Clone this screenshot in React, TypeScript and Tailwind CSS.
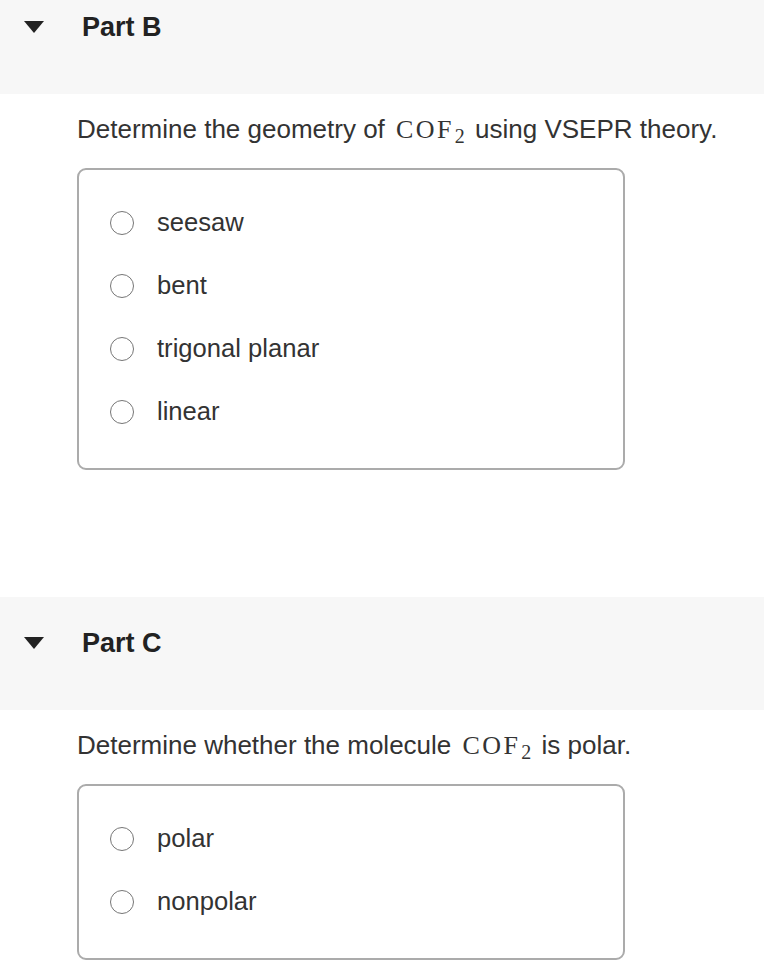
const Caret = () => (
  <svg width="20" height="12" viewBox="0 0 20 12" className="shrink-0">
    <polygon points="0,0 20,0 10,12" fill="#222222" />
  </svg>
);

// COF2 set in a math-like serif face
const Formula = () => (
  <span className="font-['Liberation_Serif','DejaVu_Serif',serif] text-[26px] tracking-[2.4px] ml-[4px] mr-[3px]">
    COF
    <sub className="text-[20px] tracking-normal ml-[1px]">2</sub>
  </span>
);

const PartHeader = ({ label, first }: { label: string; first?: boolean }) => (
  <div
    className={`bg-[#f7f7f7] h-[113px] pt-[30px] pl-[24px] flex items-start ${first ? "-mt-[19px]" : ""}`}
  >
    <div className="flex items-center h-[32px]">
      <Caret />
      <h2 className="ml-[38px] text-[27px] leading-[32px] font-bold text-[#222222]">
        {label}
      </h2>
    </div>
  </div>
);

const Choices = ({ options }: { options: string[] }) => (
  <div className="mt-[21px] w-[548px] border-2 border-[#ababab] rounded-[9px] pt-[21px] pb-[25px]">
    {options.map((opt) => (
      <label key={opt} className="h-[63px] flex items-center pl-[31px]">
        <span className="w-6 h-6 rounded-full border-[1.5px] border-[#767676] bg-white shrink-0" />
        <span className="ml-[23px] text-[25.6px] text-[#333333]">{opt}</span>
      </label>
    ))}
  </div>
);

export default function App() {
  return (
    <div className="w-[764px] h-[976px] overflow-hidden bg-white font-['Liberation_Sans',Arial,sans-serif]">
      {/* Part B */}
      <PartHeader label="Part B" first />
      <div className="pl-[77px]">
        <p className="pt-[18px] text-[26px] leading-[34px] text-[#333333]">
          Determine the geometry of <Formula /> using VSEPR theory.
        </p>
        <Choices options={["seesaw", "bent", "trigonal planar", "linear"]} />
      </div>

      {/* Part C */}
      <div className="mt-[127px]">
        <PartHeader label="Part C" />
        <div className="pl-[77px]">
          <p className="pt-[18px] text-[26px] leading-[34px] text-[#333333]">
            Determine whether the molecule <Formula /> is polar.
          </p>
          <Choices options={["polar", "nonpolar"]} />
        </div>
      </div>
    </div>
  );
}
